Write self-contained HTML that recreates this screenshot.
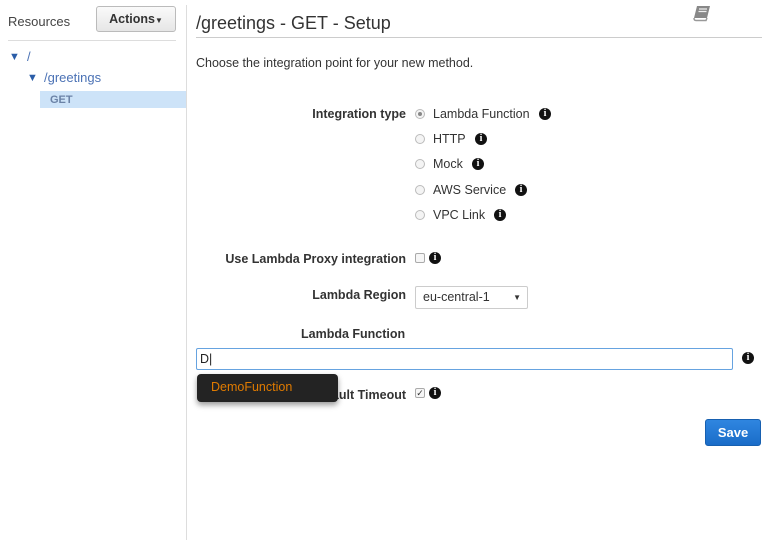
<!DOCTYPE html>
<html><head><style>
*{margin:0;padding:0;box-sizing:border-box}
body{width:768px;height:540px;background:#fff;font-family:"Liberation Sans",Arial,sans-serif;position:relative;overflow:hidden;color:#333}
.a{position:absolute;white-space:nowrap}
.lbl{position:absolute;right:362px;font-weight:bold;font-size:12.5px;color:#333;transform:translateY(-50%)}
.t{position:absolute;font-size:12.5px;color:#333;transform:translateY(-50%)}
.rad{position:absolute;width:10px;height:10px;border-radius:50%;border:1px solid #bbb;background:#f4f4f4;transform:translateY(-50%)}
.info{position:absolute;width:12px;height:12px;border-radius:50%;background:#111;color:#fff;font:bold 10px "Liberation Serif",serif;text-align:center;line-height:12px;transform:translateY(-50%)}
.cb{position:absolute;width:10px;height:10px;border:1px solid #aaa;background:#f6f6f6;border-radius:2px;transform:translateY(-50%);font-size:9px;line-height:8px;text-align:center;color:#333}
</style></head><body>
<div class="a" style="left:186px;top:5px;width:1px;height:535px;background:#ddd"></div>
<div class="a" style="left:8px;top:14px;font-size:13px;color:#444">Resources</div>
<div class="a" style="left:96px;top:6px;width:80px;height:26px;border:1px solid #bbb;border-radius:3px;background:linear-gradient(#fafafa,#e6e6e6);font-weight:bold;font-size:12.5px;color:#333;text-align:center;line-height:24px">Actions<span style="font-size:8px">▼</span></div>
<div class="a" style="left:8px;top:40px;width:168px;height:1px;background:#ddd"></div>
<div class="a" style="left:9px;top:51px;font-size:11px;color:#2a5da8">▼</div>
<div class="a" style="left:27px;top:49px;font-size:13px;color:#4b72b5">/</div>
<div class="a" style="left:27px;top:72px;font-size:11px;color:#2a5da8">▼</div>
<div class="a" style="left:44px;top:70px;font-size:13px;color:#4b72b5">/greetings</div>
<div class="a" style="left:40px;top:91px;width:146px;height:17px;background:#cde3f8"></div>
<div class="a" style="left:50px;top:94px;font-size:11px;font-weight:bold;color:#6b82a6">GET</div>

<div class="a" style="left:196px;top:13px;font-size:18px;color:#333">/greetings - GET - Setup</div>
<div class="a" style="left:196px;top:37px;width:566px;height:1px;background:#ccc"></div>
<svg class="a" style="left:692px;top:5px" width="20" height="17" viewBox="0 0 20 17"><path d="M5 1h13l-3 12H2z" fill="#888"/><path d="M2 13c0 2 1 2.5 2 2.5h10l1-2.5" fill="none" stroke="#999" stroke-width="1.5"/><path d="M7 4h8M6.5 6.5h8" stroke="#eee" stroke-width="1.2"/></svg>
<div class="a" style="left:196px;top:56px;font-size:12.5px;color:#333">Choose the integration point for your new method.</div>

<div class="lbl" style="top:114px">Integration type</div>
<div class="rad" style="left:415px;top:114px"><div style="width:4px;height:4px;border-radius:50%;background:#888;margin:2px"></div></div>
<div class="t" style="left:433px;top:114px">Lambda Function</div><div class="info" style="left:539px;top:114px">i</div>
<div class="rad" style="left:415px;top:139px"></div><div class="t" style="left:433px;top:139px">HTTP</div><div class="info" style="left:475px;top:139px">i</div>
<div class="rad" style="left:415px;top:164px"></div><div class="t" style="left:433px;top:164px">Mock</div><div class="info" style="left:472px;top:164px">i</div>
<div class="rad" style="left:415px;top:190px"></div><div class="t" style="left:433px;top:190px">AWS Service</div><div class="info" style="left:515px;top:190px">i</div>
<div class="rad" style="left:415px;top:215px"></div><div class="t" style="left:433px;top:215px">VPC Link</div><div class="info" style="left:494px;top:215px">i</div>

<div class="lbl" style="top:259px">Use Lambda Proxy integration</div>
<div class="cb" style="left:415px;top:258px"></div><div class="info" style="left:429px;top:258px">i</div>

<div class="lbl" style="top:295px">Lambda Region</div>
<div class="a" style="left:415px;top:286px;width:113px;height:23px;border:1px solid #ccc;border-radius:2px;font-size:12.5px;line-height:21px;padding-left:7px">eu-central-1<span style="position:absolute;right:6px;font-size:8px">▼</span></div>

<div class="a" style="left:301px;top:327px;font-weight:bold;font-size:12.5px">Lambda Function</div>
<div class="a" style="left:196px;top:348px;width:537px;height:22px;border:1px solid #66a3e0;border-radius:2px;font-size:12.5px;line-height:20px;padding-left:3px;color:#222">D|</div>
<div class="info" style="left:742px;top:358px">i</div>

<div class="lbl" style="top:395px">Use Default Timeout</div>
<div class="cb" style="left:415px;top:393px">✓</div><div class="info" style="left:429px;top:393px">i</div>
<div class="a" style="left:197px;top:374px;width:141px;height:28px;background:#232323;border-radius:4px;box-shadow:0 3px 6px rgba(0,0,0,.4);color:#e07b00;font-size:12.5px;line-height:26px;padding-left:14px">DemoFunction</div>

<div class="a" style="left:705px;top:419px;width:56px;height:27px;background:linear-gradient(#2f86e0,#1a6cc8);border:1px solid #1760b0;border-radius:3px;color:#fff;font-weight:bold;font-size:13px;text-align:center;line-height:25px">Save</div>
</body></html>
